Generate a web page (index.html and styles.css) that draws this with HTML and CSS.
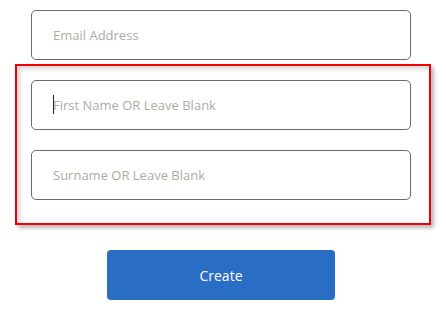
FILE: index.html
```html
<!DOCTYPE html>
<html>
<head>
<meta charset="utf-8">
<link rel="stylesheet" href="styles.css">
</head>
<body>
<div class="page">
  <div class="field"><input class="input" type="text" placeholder="Email Address"></div>
  <div class="group">
    <div class="field"><input class="input" type="text" placeholder="First Name OR Leave Blank"><span class="caret"></span></div>
    <div class="field"><input class="input" type="text" placeholder="Surname OR Leave Blank"></div>
  </div>
  <button class="btn" type="button">Create</button>
</div>
</body>
</html>
```
FILE: styles.css
```css
html, body {
  margin: 0;
  padding: 0;
  background: #ffffff;
}
.page {
  display: flex;
  flex-direction: column;
  align-items: flex-start;
  padding-top: 10px;
  font-family: "Open Sans", "Noto Sans", sans-serif;
}
.field {
  position: relative;
  width: 380px;
  height: 50px;
}
.page > .field {
  margin-left: 31px;
}
.input {
  box-sizing: border-box;
  width: 100%;
  height: 100%;
  margin: 0;
  border: 1px solid #6a6a6a;
  border-radius: 5px;
  padding: 0 0 0 21px;
  font-family: inherit;
  font-size: 13px;
  color: #333;
  background: #fff;
  outline: none;
}
.input::placeholder {
  color: #b0aaa5;
  opacity: 1;
}
.caret {
  position: absolute;
  left: 22px;
  top: 15px;
  width: 1px;
  height: 19px;
  background: #222;
}
.group {
  box-sizing: border-box;
  margin-top: 4px;
  margin-left: 15px;
  width: 416px;
  border: 2px solid #f00000;
  padding: 14px 18px 23px 14px;
  display: flex;
  flex-direction: column;
  gap: 20px;
  box-shadow: inset 3px 3px 5px rgba(0,0,0,0.16), 3px 3px 4px rgba(0,0,0,0.28);
}
.btn {
  margin-top: 25px;
  margin-left: 107px;
  width: 228px;
  height: 50px;
  border: none;
  border-radius: 4px;
  background: #2a6dc5;
  color: #ffffff;
  font-family: inherit;
  font-size: 14px;
  cursor: pointer;
}
```
